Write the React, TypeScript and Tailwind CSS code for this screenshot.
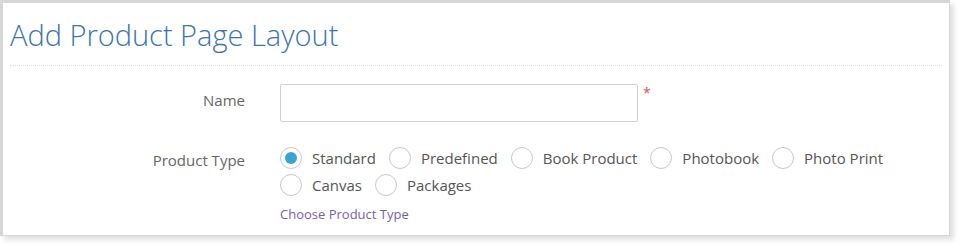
const firstRow = ["Standard", "Predefined", "Book Product", "Photobook", "Photo Print"];
const secondRow = ["Canvas", "Packages"];

function Radio({ label, checked }: { label: string; checked?: boolean }) {
  return (
    <label className="flex items-center mr-[13px]">
      <span className="flex h-[22px] w-[22px] items-center justify-center rounded-full border border-[#c8c8c8] bg-white">
        {checked && <span className="h-[12px] w-[12px] rounded-full bg-[#3ba3d0]" />}
      </span>
      <span className="ml-[10px] text-[15px] text-[#555]">{label}</span>
    </label>
  );
}

export default function App() {
  return (
    <div className="h-[247px] w-[961px] bg-white" style={{ fontFamily: '"Open Sans", sans-serif' }}>
      <div className="h-[236px] w-[950px] border-l-[3px] border-t-[3px] border-r border-b border-[#d6d6d6] bg-white shadow-[4px_4px_5px_rgba(0,0,0,0.12)]">
        <div className="mx-[7px] border-b border-dotted border-[#dedede] pb-[11px] pt-[13px]">
          <h1 className="text-[29px] font-light leading-[38px] text-[#3c75ad]">Add Product Page Layout</h1>
        </div>

        <div className="mt-[18px] flex items-start">
          <div className="w-[242px] pt-[5px] text-right text-[15px] text-[#666]">Name</div>
          <div className="ml-[35px] flex items-start">
            <input className="h-[38px] w-[358px] rounded-[2px] border border-[#cfcfcf] bg-white px-2 outline-none" />
            <span className="ml-[5px] mt-[2px] text-[14px] leading-[14px] text-[#d9534f]">*</span>
          </div>
        </div>

        <div className="mt-[25px] flex items-start">
          <div className="w-[242px] pt-[2px] text-right text-[15px] text-[#666]">Product Type</div>
          <div className="ml-[35px] w-[640px]">
            <div className="flex h-[22px] items-center">
              {firstRow.map((r, i) => (
                <Radio key={r} label={r} checked={i === 0} />
              ))}
            </div>
            <div className="mt-[5px] flex h-[22px] items-center">
              {secondRow.map((r) => (
                <Radio key={r} label={r} />
              ))}
            </div>
            <a className="mt-[9px] block text-[13px] text-[#7a5ea8]">Choose Product Type</a>
          </div>
        </div>
      </div>
    </div>
  );
}
